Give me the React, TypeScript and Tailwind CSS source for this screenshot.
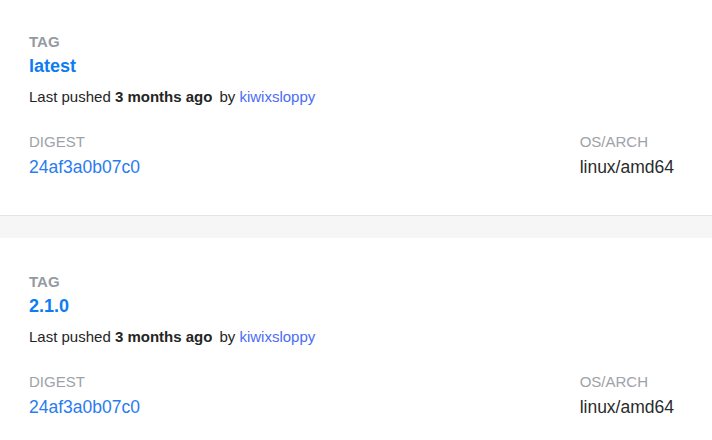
const tags = [
  { name: "latest", digest: "24af3a0b07c0", os: "linux/amd64" },
  { name: "2.1.0", digest: "24af3a0b07c0", os: "linux/amd64" },
];

const TagCard = ({ tag, first }: { tag: (typeof tags)[number]; first: boolean }) => (
  <div className={`bg-white pl-[29px] pr-[38px] pb-[37px] ${first ? "pt-[32px]" : "pt-[34px]"}`}>
    <div className="text-[15px] leading-[20px] font-bold text-[#959aa1]">TAG</div>
    <div className="mt-[3px] text-[18px] leading-[22px] font-bold text-[#0d7cf2]">{tag.name}</div>
    <div className="mt-[10px] text-[15px] leading-[20px] text-[#252525]">
      Last pushed <span className="font-bold">3 months ago</span>
      <span className="ml-[7px]">by </span>
      <span className="text-[#4a6df5]">kiwixsloppy</span>
    </div>
    <div className="mt-[25px] flex justify-between">
      <div>
        <div className="text-[15px] leading-[20px] text-[#9da2a8]">DIGEST</div>
        <div className="mt-[4px] text-[17.5px] leading-[22px] text-[#2a7bf0]">{tag.digest}</div>
      </div>
      <div>
        <div className="text-[15px] leading-[20px] text-[#9da2a8]">OS/ARCH</div>
        <div className="mt-[4px] text-[17.5px] leading-[22px] text-[#2b2b2b]">{tag.os}</div>
      </div>
    </div>
  </div>
);

export default function App() {
  return (
    <div className="w-[712px] h-[440px] overflow-hidden bg-[#f6f6f6] font-['Liberation_Sans',Arial,sans-serif]">
      {tags.map((t, i) => (
        <div key={t.name} className={i === 0 ? "border-b border-[#e1e4e8] mb-[22px]" : ""}>
          <TagCard tag={t} first={i === 0} />
        </div>
      ))}
    </div>
  );
}
